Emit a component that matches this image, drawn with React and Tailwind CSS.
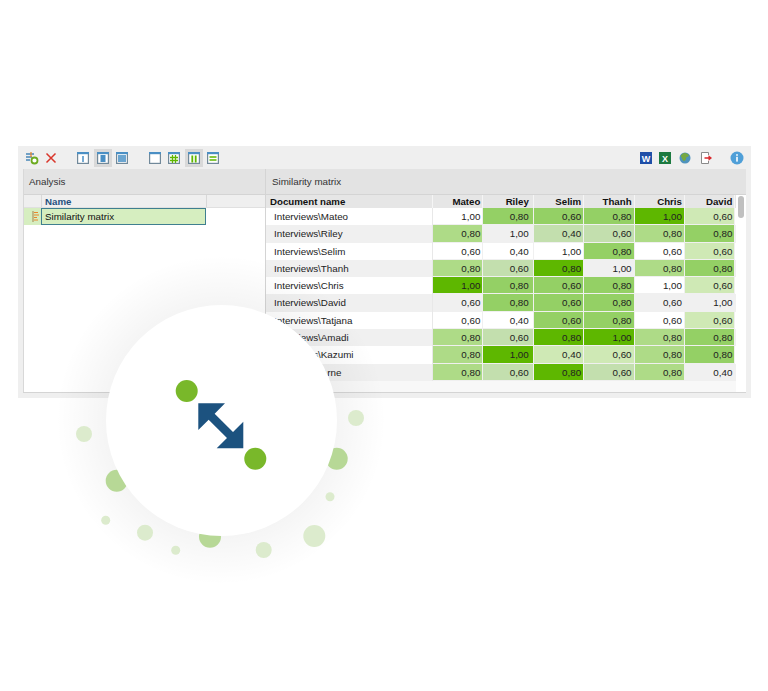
// heat map colours, lightest to darkest
const W = 'bg-white';
const G = 'bg-[#f0f0f0]';
const A = 'bg-[#cfe9b5]';
const B = 'bg-[#c3dfae]';
const C = 'bg-[#aedb87]';
const D = 'bg-[#94d065]';
const E = 'bg-[#5eb700]';

const columns = ['Mateo', 'Riley', 'Selim', 'Thanh', 'Chris', 'David'];

const rows = [
    { name: 'Interviews\\Mateo', cells: [['1,00', W], ['0,80', D], ['0,60', D], ['0,80', D], ['1,00', E], ['0,60', A]] },
    { name: 'Interviews\\Riley', cells: [['0,80', C], ['1,00', G], ['0,40', B], ['0,60', B], ['0,80', C], ['0,80', D]] },
    { name: 'Interviews\\Selim', cells: [['0,60', W], ['0,40', W], ['1,00', W], ['0,80', D], ['0,60', W], ['0,60', A]] },
    { name: 'Interviews\\Thanh', cells: [['0,80', C], ['0,60', B], ['0,80', E], ['1,00', G], ['0,80', C], ['0,80', D]] },
    { name: 'Interviews\\Chris', cells: [['1,00', E], ['0,80', D], ['0,60', D], ['0,80', D], ['1,00', W], ['0,60', A]] },
    { name: 'Interviews\\David', cells: [['0,60', G], ['0,80', D], ['0,60', D], ['0,80', D], ['0,60', G], ['1,00', G]] },
    { name: 'Interviews\\Tatjana', cells: [['0,60', W], ['0,40', W], ['0,60', D], ['0,80', D], ['0,60', W], ['0,60', A]] },
    { name: 'Interviews\\Amadi', cells: [['0,80', C], ['0,60', B], ['0,80', E], ['1,00', E], ['0,80', C], ['0,80', D]] },
    { name: 'Interviews\\Kazumi', cells: [['0,80', C], ['1,00', E], ['0,40', A], ['0,60', A], ['0,80', C], ['0,80', D]] },
    { name: 'Interviews\\Arne', cells: [['0,80', C], ['0,60', B], ['0,80', E], ['0,60', B], ['0,80', C], ['0,40', G]] },
];

const dots = [
    [84, 434, 8, '#dcebcd'], [356, 418, 8, '#dcebcd'], [336.7, 458.7, 11, '#b7d896'],
    [116.7, 480.7, 11, '#b7d896'], [330, 496.7, 4.5, '#dcebcd'], [314.3, 536, 11, '#dcebcd'],
    [263.7, 550, 8, '#dcebcd'], [210, 536.7, 11, '#b7d896'], [175.7, 550.3, 4.5, '#dcebcd'],
    [145, 532.7, 8, '#dcebcd'], [105.7, 520.3, 4.5, '#dcebcd'],
];

function Icon({ children, active }) {
    return (
        <div className={`flex h-[18px] w-[18px] shrink-0 items-center justify-center ${active ? 'bg-[#d9d9d9]' : ''}`}>
            <svg width="14" height="14" viewBox="0 0 14 14">{children}</svg>
        </div>
    );
}

function Frame({ bar = '#4a8fc4', stroke = '#71899a', children }) {
    return (
        <>
            <rect x="1.6" y="1.6" width="10.8" height="10.8" fill="#fff" stroke={stroke} strokeWidth="1.2" />
            <rect x="1" y="1" width="12" height="2.2" fill={bar} />
            {children}
        </>
    );
}

function Toolbar() {
    return (
        <div className="flex h-[23px] items-center bg-[#efefef] px-[5px]">
            <Icon>
                <path d="M1 3h8M1 6h6M1 9h4" stroke="#4a88b8" strokeWidth="1.3" />
                <path d="M6 1v5" stroke="#e8862c" strokeWidth="1.3" />
                <circle cx="9.5" cy="9.5" r="3" fill="#fff" stroke="#6cab1f" strokeWidth="1.8" />
            </Icon>
            <div className="w-[1px]" />
            <Icon>
                <path d="M2.5 2.5l9 9M11.5 2.5l-9 9" stroke="#d9362b" strokeWidth="1.5" />
            </Icon>
            <div className="w-[14px]" />
            <Icon>
                <Frame><path d="M7 5v6" stroke="#4a8fc4" strokeWidth="1.5" /></Frame>
            </Icon>
            <div className="w-[2px]" />
            <Icon active>
                <Frame><rect x="4.5" y="4" width="5" height="7" fill="#4a8fc4" /></Frame>
            </Icon>
            <div className="w-[1px]" />
            <Icon>
                <Frame><rect x="3" y="4" width="8" height="7" fill="#6ba5d0" /></Frame>
            </Icon>
            <div className="w-[15px]" />
            <Icon>
                <Frame />
            </Icon>
            <div className="w-[1px]" />
            <Icon>
                <Frame>
                    <path d="M5.5 4v8M8.5 4v8M3 6.5h8M3 9.5h8" stroke="#5eb700" strokeWidth="1.3" />
                </Frame>
            </Icon>
            <div className="w-[2px]" />
            <Icon active>
                <Frame>
                    <path d="M5.3 4.5v7M8.7 4.5v7" stroke="#5eb700" strokeWidth="1.8" />
                </Frame>
            </Icon>
            <div className="w-[1px]" />
            <Icon>
                <Frame>
                    <path d="M3.5 6h7M3.5 9h7" stroke="#5eb700" strokeWidth="1.6" />
                </Frame>
            </Icon>

            <div className="flex-1" />

            <Icon>
                <rect x="1" y="1" width="12" height="12" fill="#1f4fa8" />
                <text x="7" y="10.5" textAnchor="middle" fontSize="9" fontWeight="700" fill="#fff" fontFamily="Liberation Sans">W</text>
            </Icon>
            <div className="w-[1px]" />
            <Icon>
                <rect x="1" y="1" width="12" height="12" fill="#1c7a40" />
                <text x="7" y="10.5" textAnchor="middle" fontSize="9" fontWeight="700" fill="#fff" fontFamily="Liberation Sans">X</text>
            </Icon>
            <div className="w-[2px]" />
            <Icon>
                <circle cx="7" cy="7" r="5.5" fill="#4f93bd" />
                <path d="M5 2.5c2-1 5 0 6 2-1 2-3 1-3 3s-2 3-3 2-1-3-2-4 1-2 2-3z" fill="#76a843" />
            </Icon>
            <div className="w-[3px]" />
            <Icon>
                <path d="M9.5 4V1.5h-7v11h7V10" fill="#fff" stroke="#8a8a8a" />
                <path d="M5.5 7H10" stroke="#d9262b" strokeWidth="1.5" />
                <path d="M9.5 4.2L13 7l-3.5 2.8z" fill="#d9262b" />
            </Icon>
            <div className="w-[13px]" />
            <Icon>
                <circle cx="7" cy="7" r="6.5" fill="#4f9fd8" />
                <rect x="6.2" y="5.8" width="1.6" height="4.8" fill="#fff" />
                <rect x="6.2" y="3.2" width="1.6" height="1.6" fill="#fff" />
            </Icon>
        </div>
    );
}

function PanelHeader({ children, className }) {
    return (
        <div className={`flex h-[26px] shrink-0 items-center border-b border-[#d4d4d4] bg-[#e3e3e3] pt-[2px] text-[9.8px] text-[#333] ${className}`}>
            {children}
        </div>
    );
}

function AnalysisPanel() {
    return (
        <div className="flex w-[242px] flex-col border-l border-[#d8d8d8] bg-white">
            <PanelHeader className="pl-[5px]">Analysis</PanelHeader>
            <div className="flex h-[13px] border-b border-[#e0e0e0] bg-[#efefef] text-[9.7px] font-bold leading-[14px] text-[#1f4f7f]">
                <div className="w-[18px] border-r border-[#d8d8d8]" />
                <div className="w-[165px] border-r border-[#d8d8d8] pl-[3px]">Name</div>
            </div>
            <div className="flex h-[17px]">
                <div className="flex w-[17px] items-center justify-end bg-[#d6eec0] pr-[1px]">
                    <svg width="8" height="11" viewBox="0 0 8 11">
                        <path d="M1 0v11" stroke="#a5824a" strokeWidth="1" />
                        <path d="M2 1.5h4M2 4h5M2 6.5h3M2 9h4" stroke="#e8862c" strokeWidth="1.2" />
                    </svg>
                </div>
                <div className="w-[165px] border border-[#3f7f8f] bg-[#d6eec0] pl-[3px] text-[9.8px] leading-[16px] text-[#111]">
                    Similarity matrix
                </div>
            </div>
        </div>
    );
}

function MatrixPanel() {
    return (
        <div className="flex w-[480px] flex-col bg-white">
            <PanelHeader className="pl-[6px]">Similarity matrix</PanelHeader>
            <div className="flex">
                <div className="w-[470px]">
                    <div className="flex h-[13px] bg-[#e6e6e6] text-[9.7px] font-bold leading-[14px] text-[#111]">
                        <div className="w-[167px] border-r border-[#f5f5f5] pl-[4px]">Document name</div>
                        {columns.map((c, j) => (
                            <div key={c} className={`w-[50.4px] border-r border-[#f5f5f5] text-right ${j === 1 ? 'pr-[4px]' : 'pr-[2px]'}`}>{c}</div>
                        ))}
                    </div>
                    {rows.map((row, i) => (
                        <div key={row.name} className={`flex h-[17.3px] text-[9.8px] leading-[17px] text-[#222] ${i % 2 ? 'bg-[#f0f0f0]' : 'bg-white'}`}>
                            <div className="w-[167px] border-r border-[#e8e8e8] pl-[8px]">{row.name}</div>
                            {row.cells.map(([value, color], j) => (
                                <div key={j} className={`w-[50.4px] border-r border-b border-[#f0f0f0] text-right ${j === 1 ? 'pr-[4px]' : 'pr-[2px]'} ${color}`}>{value}</div>
                            ))}
                        </div>
                    ))}
                    <div className="h-[11px] bg-[#f8f8f8]" />
                </div>
                <div className="w-[10px] bg-white px-[2px] pt-[1px]">
                    <div className="h-[22px] rounded-full bg-[#c0c0c0]" />
                </div>
            </div>
        </div>
    );
}

function Badge() {
    return (
        <>
            <div className="absolute left-[56px] top-[255px] h-[330px] w-[330px] rounded-full bg-[radial-gradient(closest-side,rgba(0,0,0,0.045)_68%,rgba(0,0,0,0.018)_85%,rgba(0,0,0,0)_100%)]" />
            <svg className="absolute left-0 top-0" width="768" height="691">
                {dots.map(([x, y, r, fill]) => (
                    <circle key={`${x}-${y}`} cx={x} cy={y} r={r} fill={fill} />
                ))}
            </svg>
            <div className="absolute left-[106px] top-[305px] h-[231px] w-[231px] rounded-full bg-white" />
            <svg className="absolute left-0 top-0" width="768" height="691">
                <circle cx="186.7" cy="391" r="11" fill="#79b82a" />
                <circle cx="255.3" cy="458.7" r="11" fill="#79b82a" />
                <path d="M198.3 403.3H225L214.65 413.65L233 432L243.3 421.7V448.3H216.7L227 438L208.65 419.65L198.3 430Z" fill="#1c527f" />
            </svg>
        </>
    );
}

export default function App() {
    return (
        <div className="relative h-[691px] w-[768px] overflow-hidden bg-white pl-[18px] pt-[146px] font-['Liberation_Sans',sans-serif]">
            <div className="h-[252px] w-[733px] bg-[#efefef]">
                <Toolbar />
                <div className="mx-[5px] flex h-[224px] border-b border-[#d4d4d4]">
                    <AnalysisPanel />
                    <div className="w-[1px] bg-[#d4d4d4]" />
                    <MatrixPanel />
                </div>
            </div>
            <Badge />
        </div>
    );
}
